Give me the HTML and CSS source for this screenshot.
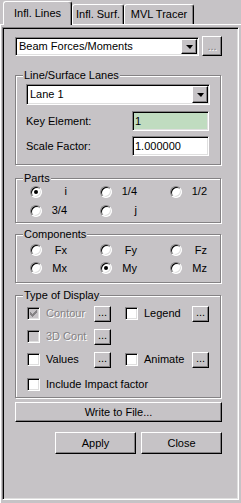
FILE: index.html
```html
<!DOCTYPE html>
<html>
<head>
<meta charset="utf-8">
<link rel="stylesheet" href="styles.css">
</head>
<body>
<div class="tabs">
  <div class="tab active">Infl. Lines</div>
  <div class="tab t-surf">Infl. Surf.</div>
  <div class="tab t-mvl">MVL Tracer</div>
</div>
<div class="page">
  <div class="frame">
    <div class="row-top">
      <div class="combo c1"><span class="combo-text">Beam Forces/Moments</span><span class="arrow raised"><i class="tri"></i></span></div>
      <div class="raised btn dots-top disabled">...</div>
    </div>

    <div class="group g-lanes">
      <div class="legend">Line/Surface Lanes</div>
      <div class="combo c2"><span class="combo-text">Lane 1</span><span class="arrow raised"><i class="tri"></i></span></div>
      <div class="field-row r-key"><span class="flabel">Key Element:</span><div class="field green">1</div></div>
      <div class="field-row r-scale"><span class="flabel">Scale Factor:</span><div class="field">1.000000</div></div>
    </div>

    <div class="group g-parts">
      <div class="legend">Parts</div>
      <div class="radio-grid parts-grid">
        <div class="rcell"><span class="radio on"></span><span class="rlabel">i</span></div>
        <div class="rcell"><span class="radio"></span><span class="rlabel">1/4</span></div>
        <div class="rcell"><span class="radio"></span><span class="rlabel">1/2</span></div>
        <div class="rcell"><span class="radio"></span><span class="rlabel">3/4</span></div>
        <div class="rcell"><span class="radio"></span><span class="rlabel">j</span></div>
      </div>
    </div>

    <div class="group g-comp">
      <div class="legend">Components</div>
      <div class="radio-grid comp-grid">
        <div class="rcell"><span class="radio"></span><span class="rlabel">Fx</span></div>
        <div class="rcell"><span class="radio"></span><span class="rlabel">Fy</span></div>
        <div class="rcell"><span class="radio"></span><span class="rlabel">Fz</span></div>
        <div class="rcell"><span class="radio"></span><span class="rlabel">Mx</span></div>
        <div class="rcell"><span class="radio on"></span><span class="rlabel">My</span></div>
        <div class="rcell"><span class="radio"></span><span class="rlabel">Mz</span></div>
      </div>
    </div>

    <div class="group g-type">
      <div class="legend">Type of Display</div>
      <div class="type-grid">
        <div class="ccell disabled"><span class="cb dis"><svg width="7" height="7" viewBox="0 0 7 7"><path d="M0 2h1v1h1v1h1v-1h1v-1h1v-1h1v-1h1v3h-1v1h-1v1h-1v1h-1v1h-1v-1h-1v-1h-1z" fill="#848284"/></svg></span><span class="clabel">Contour</span></div>
        <div class="raised btn dots">...</div>
        <div></div>
        <div class="ccell"><span class="cb"></span><span class="clabel">Legend</span></div>
        <div class="raised btn dots">...</div>

        <div class="ccell disabled"><span class="cb dis"></span><span class="clabel">3D Cont</span></div>
        <div class="raised btn dots">...</div>
        <div></div>
        <div></div>
        <div></div>

        <div class="ccell"><span class="cb"></span><span class="clabel">Values</span></div>
        <div class="raised btn dots">...</div>
        <div></div>
        <div class="ccell"><span class="cb"></span><span class="clabel">Animate</span></div>
        <div class="raised btn dots">...</div>

        <div class="ccell wide last"><span class="cb"></span><span class="clabel">Include Impact factor</span></div>
      </div>
    </div>

    <div class="raised btn write">Write to File...</div>

    <div class="actions">
      <div class="raised btn act">Apply</div>
      <div class="raised btn act">Close</div>
    </div>
  </div>
</div>
</body>
</html>
```

FILE: styles.css
```css
* { box-sizing: border-box; }

body {
  margin: 0;
  width: 241px;
  height: 503px;
  overflow: hidden;
  background: #c6c3c6;
  color: #000;
  font: 11px/13px "Liberation Sans", Arial, sans-serif;
}

/* ---------- tabs ---------- */
.tabs {
  display: flex;
  align-items: flex-end;
  height: 24px;
  padding-left: 3px;
}

.tab {
  height: 20px;
  border-top: 1px solid #fff;
  border-left: 1px solid #fff;
  border-right: 1px solid #000;
  box-shadow: inset -1px 0 0 #848284;
  border-radius: 3px 3px 0 0;
  text-align: center;
  padding-top: 3px;
  background: #c6c3c6;
}

.tab.active {
  width: 69px;
  height: 24px;
  margin-bottom: -1px;
  padding-top: 5px;
  position: relative;
  z-index: 2;
}

.t-surf { width: 52px; }
.t-mvl { width: 70px; }

/* ---------- page ---------- */
.page {
  height: 479px;
  border-top: 1px solid #fff;
  border-left: 1px solid #fff;
  padding: 2px 2px 3px 1px;
}

.frame {
  height: 100%;
  border: 1px solid;
  border-color: #848284 #fff #fff #848284;
  box-shadow: inset 1px 1px 0 #000, inset -1px -1px 0 #dfdfdf;
  padding: 8px 0 0 12px;
}

/* ---------- generic controls ---------- */
.raised {
  background: #c6c3c6;
  border: 1px solid;
  border-color: #fff #000 #000 #fff;
  box-shadow: inset -1px -1px 0 #848284;
}

.btn {
  display: flex;
  align-items: center;
  justify-content: center;
}

.disabled { color: #848284; text-shadow: 1px 1px 0 #fff; }

.sunken {
  border: 1px solid;
  border-color: #848284 #fff #fff #848284;
  box-shadow: inset 1px 1px 0 #000, inset -1px -1px 0 #dfdfdf;
}

.combo {
  display: flex;
  background: #fff;
  border: 1px solid;
  border-color: #848284 #fff #fff #848284;
  box-shadow: inset 1px 1px 0 #000, inset -1px -1px 0 #dfdfdf;
  padding: 1px;
}

.combo-text {
  flex: 1;
  padding-left: 2px;
  display: flex;
  align-items: center;
  white-space: nowrap;
}

.arrow {
  width: 16px;
  display: flex;
  align-items: center;
  justify-content: center;
}

.tri {
  width: 0;
  height: 0;
  border-left: 4px solid transparent;
  border-right: 3px solid transparent;
  border-top: 4px solid #000;
  margin-top: 1px;
}

/* ---------- top row ---------- */
.row-top {
  display: flex;
  justify-content: space-between;
  align-items: flex-end;
  width: 207px;
  height: 20px;
}

.c1 { width: 184px; height: 19px; }
.dots-top { width: 20px; height: 20px; }

/* ---------- group boxes ---------- */
.group {
  position: relative;
  width: 206px;
  border: 1px solid #848284;
  box-shadow: inset 1px 1px 0 #fff, 1px 1px 0 #fff;
}

.legend {
  position: absolute;
  top: -7px;
  left: 7px;
  padding: 0 1px;
  background: #c6c3c6;
}

.g-lanes { margin-top: 19px; padding: 8px 0 8px 10px; }
.c2 { width: 184px; height: 21px; }

.field-row {
  display: flex;
  align-items: center;
  height: 20px;
}
.r-key { margin-top: 6px; }
.r-scale { margin-top: 5px; }

.flabel { width: 106px; }

.field {
  width: 77px;
  height: 20px;
  background: #fff;
  border: 1px solid;
  border-color: #848284 #fff #fff #848284;
  box-shadow: inset 1px 1px 0 #000, inset -1px -1px 0 #dfdfdf;
  padding-left: 2px;
  display: flex;
  align-items: center;
}
.field.green { background: #c0dcc0; }

/* radios */
.g-parts { margin-top: 13px; padding: 3px 0 2px 14px; }
.g-comp { margin-top: 11px; padding: 6px 0 5px 14px; }

.radio-grid {
  display: grid;
  grid-template-columns: 70px 70px 50px;
}
.parts-grid { grid-auto-rows: 19px; }
.comp-grid { grid-auto-rows: 18px; }

.rcell {
  display: flex;
  align-items: center;
}

.radio {
  position: relative;
  width: 12px;
  height: 12px;
  border-radius: 50%;
  background: #fff;
  border: 1px solid;
  border-color: #848284 #fff #fff #848284;
  box-shadow: inset 1px 1px 0 #000, inset -1px -1px 0 #dfdfdf;
}

.radio.on::after {
  content: "";
  position: absolute;
  left: 3px;
  top: 3px;
  width: 4px;
  height: 4px;
  border-radius: 50%;
  background: #000;
}

.rlabel {
  width: 25px;
  text-align: right;
}

/* type of display */
.g-type { margin-top: 12px; padding: 6px 0 3px 11px; }

.type-grid {
  display: grid;
  grid-template-columns: 67px 17px 14px 67px 17px;
  grid-template-rows: 23px 23px 23px 23px;
  align-items: center;
}

.ccell {
  display: flex;
  align-items: center;
  gap: 6px;
  height: 23px;
}

.ccell.wide { grid-column: 1 / 6; }
.ccell.last { margin-top: 4px; }

.cb {
  width: 13px;
  height: 13px;
  background: #fff;
  border: 1px solid;
  border-color: #848284 #fff #fff #848284;
  box-shadow: inset 1px 1px 0 #000, inset -1px -1px 0 #dfdfdf;
  display: flex;
  align-items: center;
  justify-content: center;
  flex: none;
}
.cb.dis { background: #c6c3c6; }
.cb svg { display: block; }

.dots {
  width: 17px;
  height: 16px;
  padding-bottom: 2px;
}

/* bottom buttons */
.write {
  margin-top: 4px;
  width: 207px;
  height: 20px;
}

.actions {
  margin-top: 10px;
  width: 207px;
  display: flex;
  justify-content: flex-end;
  gap: 5px;
}

.act {
  width: 81px;
  height: 22px;
}
```
